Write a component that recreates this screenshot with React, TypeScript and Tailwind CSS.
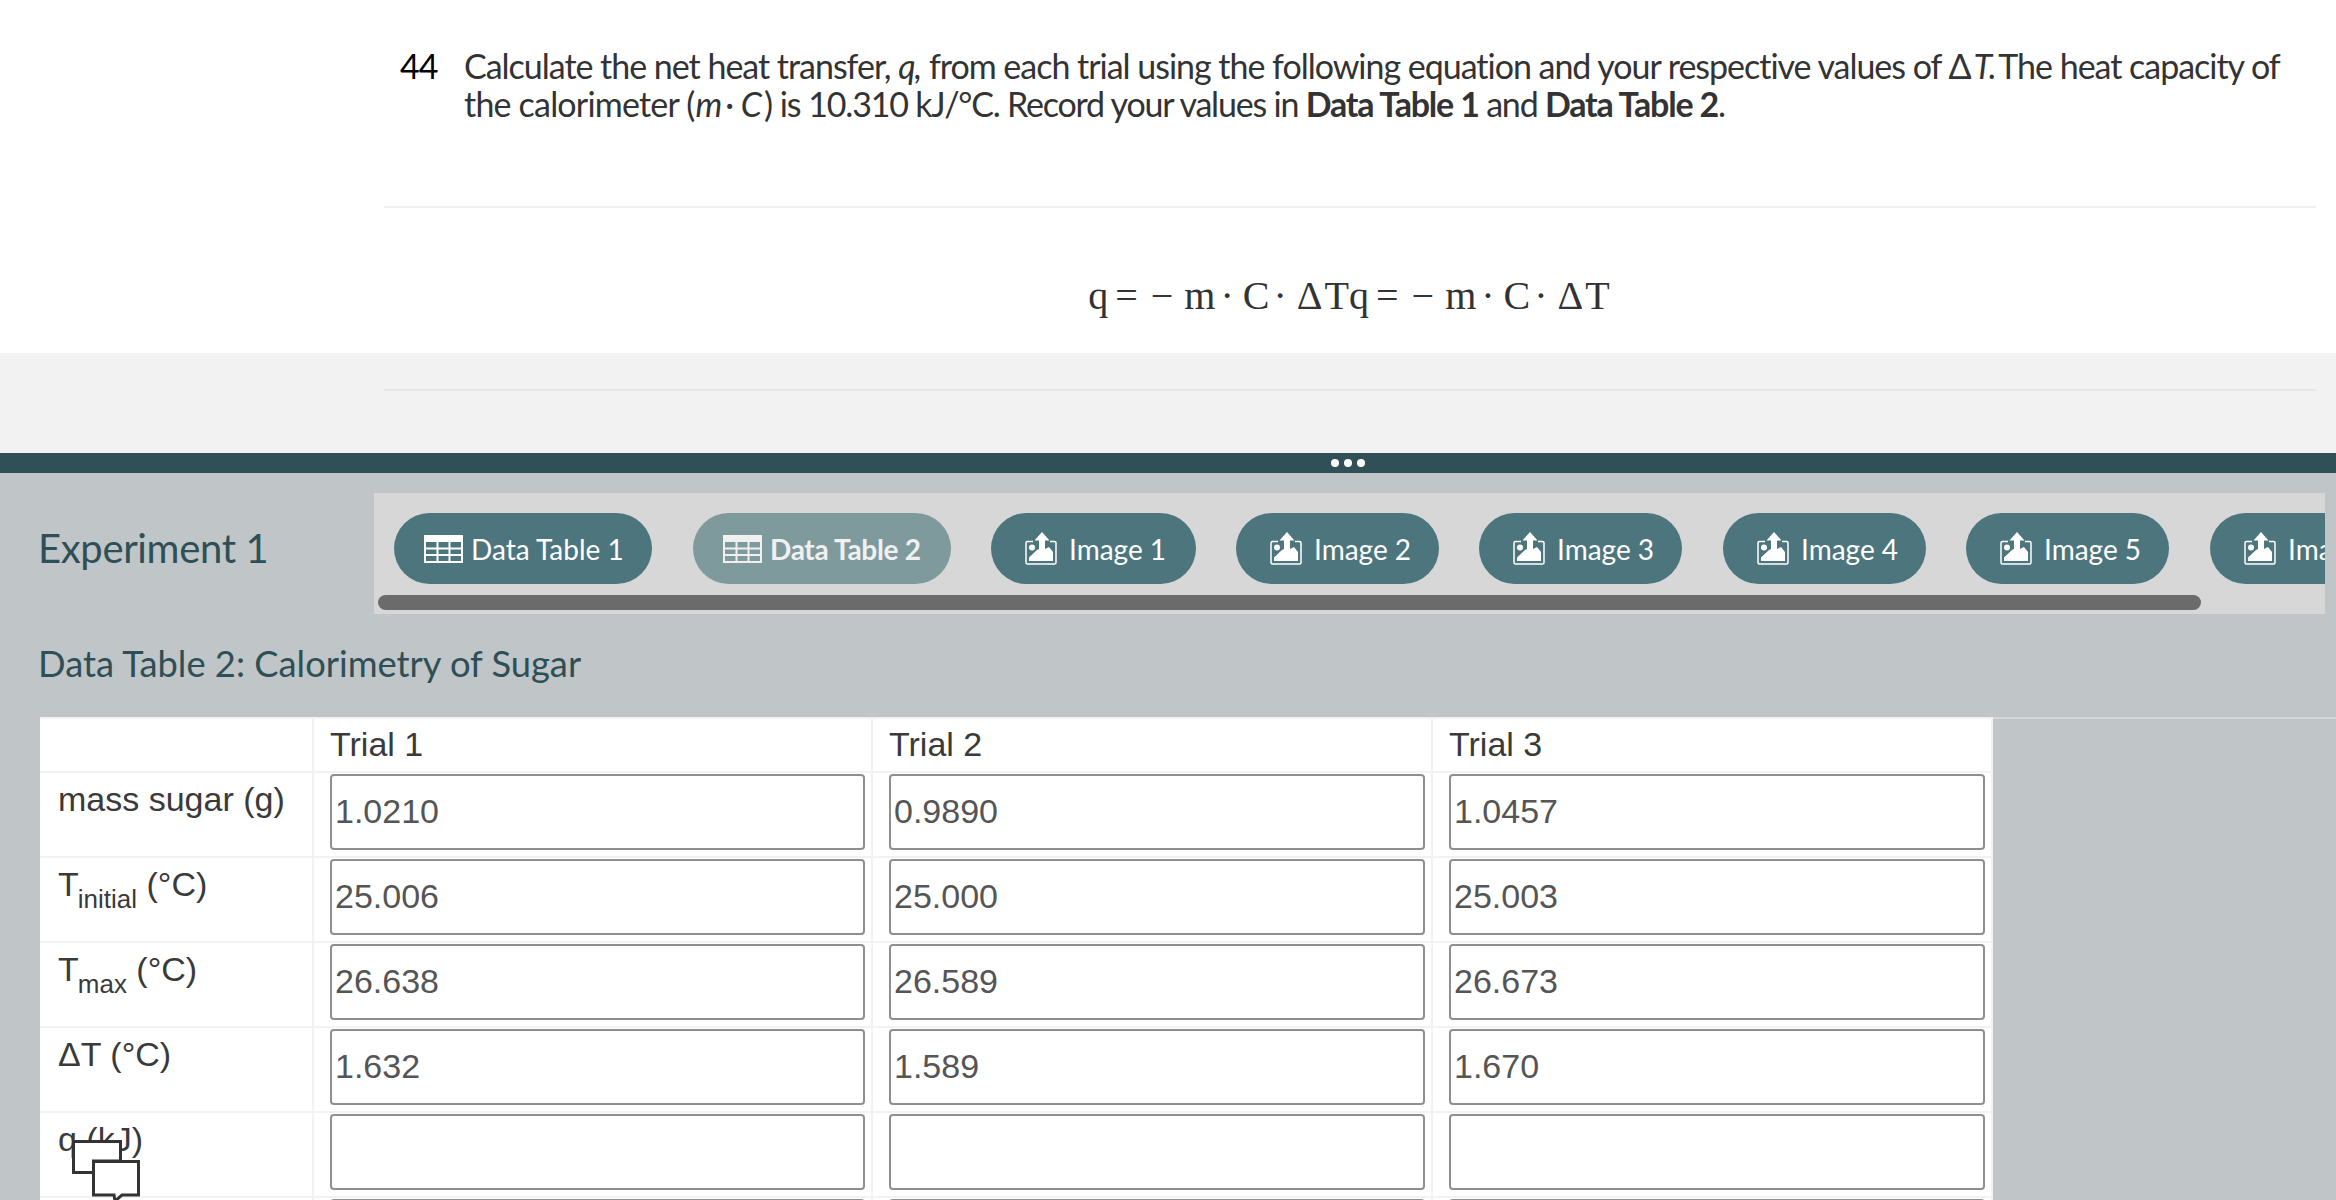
const TableIcon = () => (
  <svg width="39" height="28" viewBox="0 0 39 28" className="shrink-0">
    <rect x="1" y="1" width="37" height="26" fill="none" stroke="currentColor" strokeWidth="2" />
    <rect x="1" y="1" width="37" height="6" fill="currentColor" />
    <path d="M1 13.5H38M1 20H38M13.5 7V27M25.5 7V27" stroke="currentColor" strokeWidth="2" fill="none" />
  </svg>
);

const ImageIcon = () => (
  <svg width="32" height="33" viewBox="0 0 32 33" className="shrink-0">
    <path d="M8 9.5H2.5Q1 9.5 1 11V30.5Q1 32 2.5 32H29.5Q31 32 31 30.5V11Q31 9.5 29.5 9.5H25" fill="none" stroke="currentColor" strokeWidth="1.5" />
    <path d="M17 0L24.5 8.5H20V17H14V8.5H9.5Z" fill="currentColor" />
    <circle cx="7" cy="15.5" r="3" fill="currentColor" />
    <path d="M4 29V25.5L12 18L14 17H20L24 15L28 20V29Z" fill="currentColor" />
  </svg>
);

const tabs = [
  { label: "Data Table 1", kind: "table", w: "w-[258px]", ml: "ml-0", faded: false },
  { label: "Data Table 2", kind: "table", w: "w-[258px]", ml: "ml-[41px]", faded: true },
  { label: "Image 1", kind: "image", w: "w-[205px]", ml: "ml-[40px]", faded: false },
  { label: "Image 2", kind: "image", w: "w-[203px]", ml: "ml-[40px]", faded: false },
  { label: "Image 3", kind: "image", w: "w-[203px]", ml: "ml-[40px]", faded: false },
  { label: "Image 4", kind: "image", w: "w-[203px]", ml: "ml-[41px]", faded: false },
  { label: "Image 5", kind: "image", w: "w-[203px]", ml: "ml-[40px]", faded: false },
  { label: "Image 6", kind: "image", w: "w-[203px]", ml: "ml-[41px]", faded: false },
];

const rows = [
  { key: "mass", label: <>mass sugar (g)</>, v: ["1.0210", "0.9890", "1.0457"] },
  { key: "ti", label: <>T<sub className="ml-[-1px] text-[26px] align-[-5px] leading-none">initial</sub> (°C)</>, v: ["25.006", "25.000", "25.003"] },
  { key: "tm", label: <>T<sub className="ml-[-1px] text-[26px] align-[-5px] leading-none">max</sub> (°C)</>, v: ["26.638", "26.589", "26.673"] },
  { key: "dt", label: <>ΔT (°C)</>, v: ["1.632", "1.589", "1.670"] },
  { key: "q", label: <>q (kJ)</>, v: ["", "", ""] },
  { key: "x", label: <></>, v: ["", "", ""] },
];

const Eq = () => (
  <span className="inline-flex items-baseline">
    <span>q</span>
    <span className="ml-[7px]">=</span>
    <span className="ml-[13px]">−</span>
    <span className="ml-[11px]">m</span>
    <span className="ml-[5px]">·</span>
    <span className="ml-[9px]">C</span>
    <span className="ml-[4px]">·</span>
    <span className="ml-[10px]">Δ</span>
    <span className="ml-[2px]">T</span>
  </span>
);

export default function App() {
  return (
    <div className="h-[1200px] overflow-hidden bg-[#c0c5c8] font-['Lato',sans-serif]">
      <div className="bg-white h-[353px] pl-[384px] pr-[20px] flex flex-col">
        <div className="flex pt-[47px] pl-[16px] h-[206px] shrink-0 text-[34px] leading-[38px] text-[#333] tracking-[-1.02px]">
          <span className="w-[64px] shrink-0 text-black">44</span>
          <p className="whitespace-nowrap">
            Calculate the net heat transfer, <i>q,</i> from each trial using the following equation and your respective values of Δ<i className="ml-[3px] mr-[-4px]">T.</i> The heat capacity of
            <br />
            <span className="tracking-[-0.8px]">the calorimeter (</span><i className="mr-[4px] ml-[1px]">m</i>· <i className="mr-[3px]">C</i>) is <span className="tracking-[-1.2px]">10.310 kJ/°C. Record your values in <b>Data Table 1</b> and <b>Data Table 2</b>.</span>
          </p>
        </div>
        <div className="h-[2px] shrink-0 bg-[#f0f0f0]" />
        <div className="flex justify-center pt-[66px] pr-[2px] text-[40px] leading-[44px] text-[#333] font-['Liberation_Serif',serif]">
          <Eq />
          <Eq />
        </div>
      </div>
      <div className="bg-[#f2f2f2] h-[100px] pl-[384px] pr-[20px] pt-[36px]">
        <div className="h-[2px] bg-[#e6e6e6]" />
      </div>
      <div className="h-[20px] bg-[#304f56] flex items-center pl-[1331px] gap-[5px]">
        <span className="size-[8px] rounded-full bg-white" />
        <span className="size-[8px] rounded-full bg-white" />
        <span className="size-[8px] rounded-full bg-white" />
      </div>
      <div className="flex pt-[20px] pl-[40px]">
        <div className="w-[334px] h-[121px] flex items-center pb-[12px] ml-[-2px] mr-[2px] text-[40px] tracking-[-0.35px] text-[#2f4f56] shrink-0">Experiment 1</div>
        <div className="w-[1951px] h-[121px] bg-[#d7d7d7] overflow-hidden flex flex-col">
          <div className="flex pt-[20px] pl-[20px]">
            {tabs.map((t) => (
              <div
                key={t.label}
                className={`${t.w} ${t.ml} h-[71px] shrink-0 rounded-full flex items-center whitespace-nowrap text-[28px] ${t.kind === "table" ? "pl-[30px] gap-[8px]" : "pl-[34px] gap-[12px]"} ${t.faded ? "bg-[#7f9a9d] text-[#f0f0f0] font-bold tracking-[-0.3px]" : "bg-[#4c757d] text-white"}`}
              >
                {t.kind === "table" ? <TableIcon /> : <ImageIcon />}
                <span>{t.label}</span>
              </div>
            ))}
          </div>
          <div className="mt-[11px] ml-[4px] w-[1823px] h-[15px] rounded-full bg-[#6b6b6b]" />
        </div>
      </div>
      <h2 className="pl-[38px] mt-[28px] h-[75px] leading-[42px] text-[36.3px] text-[#2f4f56]">Data Table 2: Calorimetry of Sugar</h2>
      <div className="flex">
        <table className="ml-[40px] shrink-0 table-fixed border-collapse w-[1952px] bg-white font-['Liberation_Sans',sans-serif] text-[34px] text-[#3a3a3a]">
          <colgroup>
            <col className="w-[273px]" />
            <col className="w-[559px]" />
            <col className="w-[560px]" />
            <col className="w-[560px]" />
          </colgroup>
          <thead>
            <tr className="h-[54px]">
              <th className="border-2 border-l-0 border-[#f2f2f2] p-0" />
              {["Trial 1", "Trial 2", "Trial 3"].map((h) => (
                <th key={h} className="border-2 border-[#f2f2f2] pl-[16px] p-0 pl-[16px] text-left font-normal leading-[50px] align-top">{h}</th>
              ))}
            </tr>
          </thead>
          <tbody>
            {rows.map((r) => (
              <tr key={r.key} className="h-[85px]">
                <td className="border-2 border-l-0 border-[#f2f2f2] pl-[18px] pt-[4px] align-top leading-[44px] whitespace-nowrap">{r.label}</td>
                {r.v.map((v, i) => (
                  <td key={i} className="border-2 border-[#f2f2f2] pl-[16px] pr-[6px] pt-[1px] pb-0 align-top">
                    <input
                      readOnly
                      value={v}
                      className="block w-full h-[76px] border-2 border-[#8f8f8f] rounded-[4px] pl-[3px] pb-[2px] bg-white text-[#555] text-[34px] font-['Liberation_Sans',sans-serif]"
                    />
                  </td>
                ))}
              </tr>
            ))}
          </tbody>
        </table>
        <div className="h-[2px] flex-1 bg-[#d3d6d7]" />
      </div>
      <svg width="70" height="62" viewBox="0 0 70 62" className="fixed left-[72px] top-[1140px]">
        <path d="M1.5 1.5H48.5V21H21.5V32.5H1.5Z" fill="#fff" stroke="#333" strokeWidth="3" />
        <path d="M21.5 21.5H66.5V55H50L43 61L42 55H21.5Z" fill="#fff" stroke="#333" strokeWidth="3" />
      </svg>
    </div>
  );
}
